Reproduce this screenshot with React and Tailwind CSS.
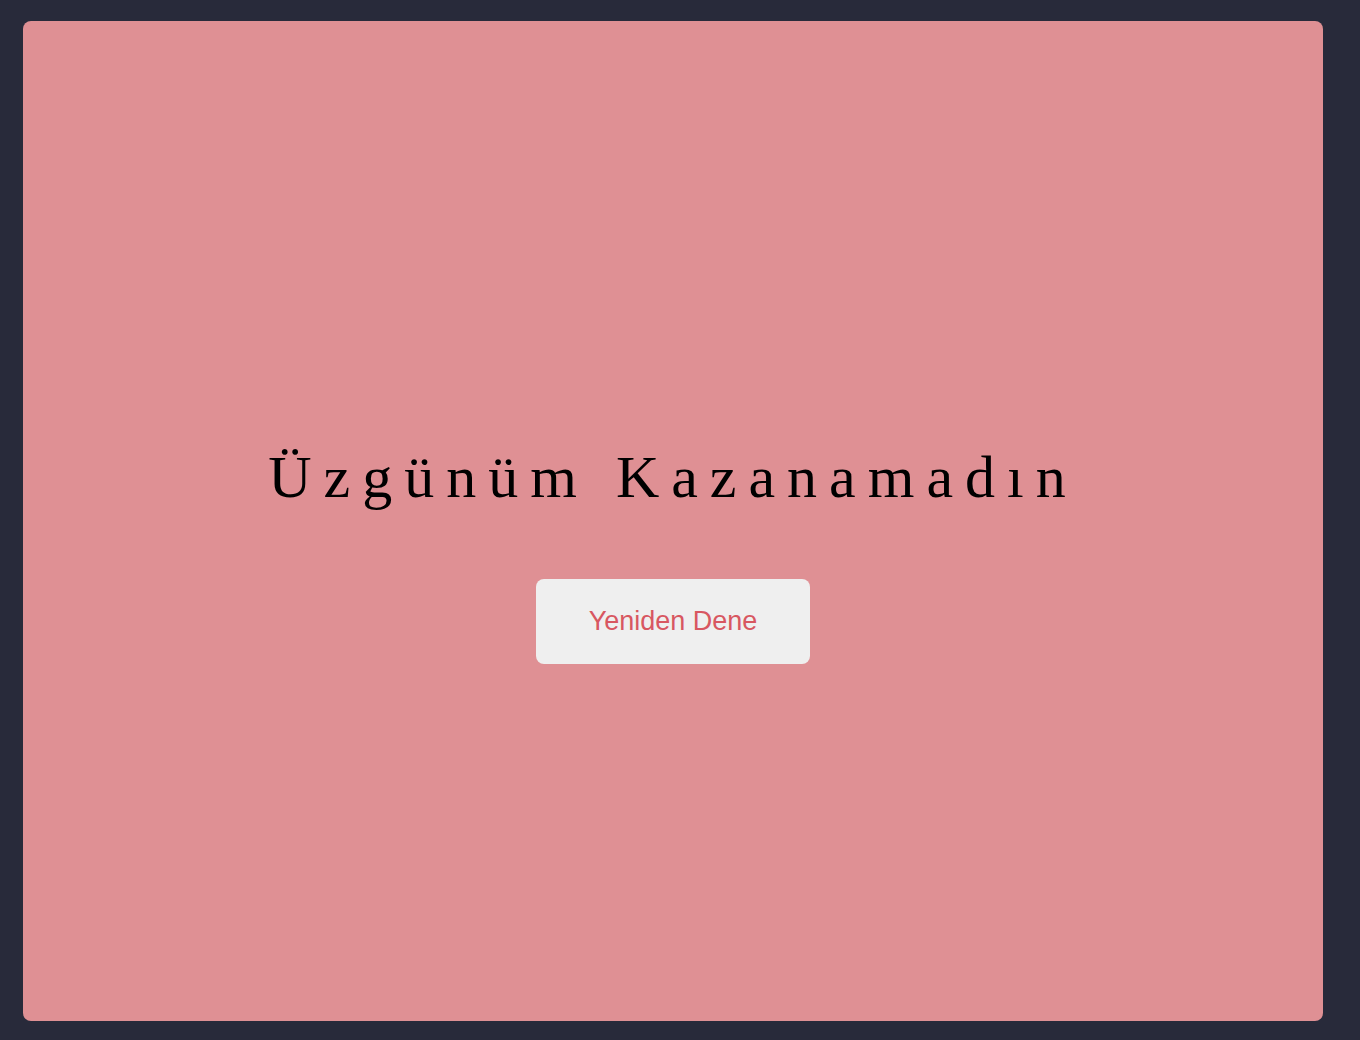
import React from 'react';

const App = () => {
  return (
    <div className="min-h-screen w-full bg-[#282a3a] pt-[21px] pl-[23px] pb-[19px]">
      {/* Result card */}
      <div className="w-[1300px] h-[1000px] rounded-lg bg-[#df9094] flex flex-col items-center justify-center pt-[68px]">
        <h1
          className="text-[60px] leading-none text-black tracking-[12px]"
          style={{ fontFamily: '"Liberation Serif", "Times New Roman", serif' }}
        >
          Üzgünüm Kazanamadın
        </h1>
        <button
          className="mt-[72px] w-[274px] h-[85px] rounded-lg bg-[#efefef] text-[27px] text-[#d85761]"
          style={{ fontFamily: '"Liberation Sans", Arial, sans-serif' }}
        >
          Yeniden Dene
        </button>
      </div>
    </div>
  );
};

export default App;
